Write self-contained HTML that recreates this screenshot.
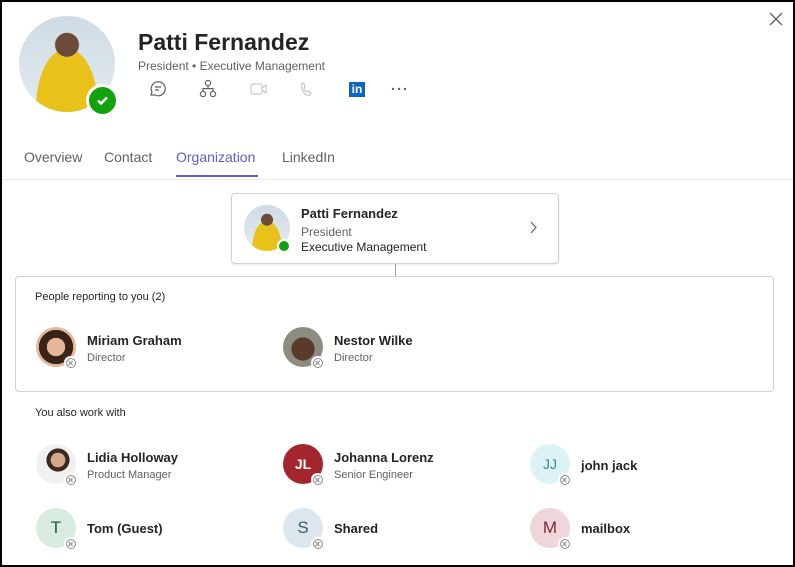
<!DOCTYPE html>
<html><head><meta charset="utf-8"><style>
*{margin:0;padding:0;box-sizing:border-box}
body{width:795px;height:567px;overflow:hidden;background:#fff;font-family:"Liberation Sans",sans-serif;color:#242424;position:relative}
.frame{position:absolute;left:0;top:0;width:795px;height:567px;border:2px solid #000}
.abs{position:absolute}
.av{position:absolute;border-radius:50%;display:flex;align-items:center;justify-content:center;font-size:17px}
.pres{position:absolute;width:13px;height:13px;border-radius:50%;background:#fff;display:flex;align-items:center;justify-content:center}
.pres i{display:block;width:10px;height:10px;border-radius:50%;border:1px solid #8a8a8a;position:relative}
.pres i:before,.pres i:after{content:"";position:absolute;left:3.5px;top:1px;width:1px;height:6px;background:#8a8a8a;transform:rotate(45deg)}
.pres i:after{transform:rotate(-45deg)}
.nm{position:absolute;font-weight:bold;font-size:13px}
.sb{position:absolute;font-size:11px;color:#616161}
.tab{position:absolute;top:149px;font-size:14px;color:#616161}
</style></head><body>
<!-- big avatar -->
<div class="av" style="left:19px;top:16px;width:96px;height:96px;background:radial-gradient(circle at 50% 30%,#6b4a3a 0 14%,transparent 15%),radial-gradient(ellipse at 50% 95%,#e8c21a 0 45%,transparent 46%),linear-gradient(#cfdbe4,#e3ebef)"></div>
<div class="abs" style="left:86px;top:84px;width:33px;height:33px;border-radius:50%;background:#fff"></div>
<div class="abs" style="left:89px;top:87px;width:27px;height:27px;border-radius:50%;background:#13a10e"></div>
<svg class="abs" style="left:95px;top:93px" width="15" height="15" viewBox="0 0 15 15"><path d="M3 7.5l3 3 6-6" stroke="#fff" stroke-width="2.4" fill="none"/></svg>
<div class="abs" style="left:138px;top:29px;font-size:23px;font-weight:bold">Patti Fernandez</div>
<div class="abs" style="left:138px;top:59px;font-size:12px;color:#616161">President • Executive Management</div>
<svg class="abs" style="left:148px;top:79px" width="265" height="20" viewBox="0 0 265 20" fill="none" stroke="#616161" stroke-width="1.2">
<path d="M3 16l1-3a7 7 0 1 1 3 3z"/><path d="M7 8h6M7 11h4"/>
<circle cx="60" cy="4" r="2.6"/><circle cx="55" cy="15" r="2.6"/><circle cx="65" cy="15" r="2.6"/><path d="M60 6.6v3M55 12.4v-2.8h10v2.8"/>
<g stroke="#c8c8c8"><rect x="103" y="5" width="11" height="10" rx="2"/><path d="M114 9l4-3v8l-4-3"/>
<path d="M155 4c-2 1-2 4 0 8s5 5 7 4l1-2-3-2-1 1c-2-1-3-3-3-4l1-1-1-3z"/></g>
<circle cx="245" cy="10" r="1.2" fill="#616161" stroke="none"/><circle cx="251" cy="10" r="1.2" fill="#616161" stroke="none"/><circle cx="257" cy="10" r="1.2" fill="#616161" stroke="none"/>
</svg>
<div class="abs" style="left:349px;top:82px;width:16px;height:15px;background:#0a66c2;color:#fff;font-weight:bold;font-size:12px;line-height:15px;text-align:center">in</div>
<svg class="abs" style="left:769px;top:12px" width="14" height="14"><path d="M1 1l12 12M13 1L1 13" stroke="#616161" stroke-width="1.3"/></svg>
<div class="tab" style="left:24px">Overview</div>
<div class="tab" style="left:104px">Contact</div>
<div class="tab" style="left:176px;color:#5b5fc7">Organization</div>
<div class="tab" style="left:282px">LinkedIn</div>
<div class="abs" style="left:176px;top:175px;width:82px;height:2px;background:#5b5fc7"></div>
<div class="abs" style="left:2px;top:179px;width:791px;height:1px;background:#ebebeb"></div>
<!-- card -->
<div class="abs" style="left:231px;top:193px;width:328px;height:71px;border:1px solid #d1d1d1;border-radius:4px;box-shadow:0 1px 2px rgba(0,0,0,.08)"></div>
<div class="av" style="left:244px;top:205px;width:46px;height:46px;background:radial-gradient(circle at 50% 32%,#6b4a3a 0 15%,transparent 16%),radial-gradient(ellipse at 50% 95%,#e8c21a 0 45%,transparent 46%),linear-gradient(#cfdbe4,#e3ebef)"></div>
<div class="abs" style="left:277px;top:239px;width:14px;height:14px;border-radius:50%;background:#13a10e;border:2px solid #fff"></div>
<div class="nm" style="left:301px;top:206px">Patti Fernandez</div>
<div class="sb" style="left:301px;top:225px;font-size:12px">President</div>
<div class="sb" style="left:301px;top:240px;font-size:12px;color:#242424">Executive Management</div>
<svg class="abs" style="left:530px;top:221px" width="8" height="13"><path d="M1 1l5 5.5L1 12" stroke="#616161" stroke-width="1.2" fill="none"/></svg>
<div class="abs" style="left:395px;top:264px;width:1px;height:12px;background:#a0a0a0"></div>
<div class="abs" style="left:15px;top:276px;width:759px;height:116px;border:1px solid #d1d1d1;border-radius:4px"></div>
<div class="abs" style="left:35px;top:291px;font-size:11px">People reporting to you (2)</div>
<div class="av" style="left:36px;top:327px;width:40px;height:40px;background:radial-gradient(circle at 50% 50%,#e6b79a 0 32%,#3a2418 33% 60%,#e6b79a 61%)"></div>
<div class="pres" style="left:64px;top:356px"><i></i></div>
<div class="nm" style="left:87px;top:333px">Miriam Graham</div><div class="sb" style="left:87px;top:352px">Director</div>
<div class="av" style="left:283px;top:327px;width:40px;height:40px;background:radial-gradient(circle at 50% 55%,#5a3a2a 0 38%,#8c8c80 40%)"></div>
<div class="pres" style="left:311px;top:356px"><i></i></div>
<div class="nm" style="left:334px;top:333px">Nestor Wilke</div><div class="sb" style="left:334px;top:352px">Director</div>
<div class="abs" style="left:35px;top:407px;font-size:11px">You also work with</div>
<!-- row1 -->
<div class="av" style="left:36px;top:444px;width:40px;height:40px;background:radial-gradient(circle at 55% 40%,#d6a78a 0 22%,#3a2a22 23% 35%,#f0f0f0 36%)"></div>
<div class="pres" style="left:64px;top:473px"><i></i></div>
<div class="nm" style="left:87px;top:450px">Lidia Holloway</div><div class="sb" style="left:87px;top:469px">Product Manager</div>
<div class="av" style="left:283px;top:444px;width:40px;height:40px;background:#a4262c;color:#fff;font-size:14px;font-weight:bold">JL</div>
<div class="pres" style="left:311px;top:473px"><i style="border-color:#8a8a8a"></i></div>
<div class="nm" style="left:334px;top:450px">Johanna Lorenz</div><div class="sb" style="left:334px;top:469px">Senior Engineer</div>
<div class="av" style="left:530px;top:444px;width:40px;height:40px;background:#ddf2f5;color:#3b8a9a;font-size:14px">JJ</div>
<div class="pres" style="left:558px;top:473px"><i></i></div>
<div class="nm" style="left:581px;top:458px">john jack</div>
<!-- row2 -->
<div class="av" style="left:36px;top:508px;width:40px;height:40px;background:#d8ebdf;color:#1f5a3a">T</div>
<div class="pres" style="left:64px;top:537px"><i></i></div>
<div class="nm" style="left:87px;top:521px">Tom (Guest)</div>
<div class="av" style="left:283px;top:508px;width:40px;height:40px;background:#dce6ec;color:#3a5a6a">S</div>
<div class="pres" style="left:311px;top:537px"><i></i></div>
<div class="nm" style="left:334px;top:521px">Shared</div>
<div class="av" style="left:530px;top:508px;width:40px;height:40px;background:#efd6da;color:#7a2a36">M</div>
<div class="pres" style="left:558px;top:537px"><i></i></div>
<div class="nm" style="left:581px;top:521px">mailbox</div>
<div class="frame"></div>
</body></html>
